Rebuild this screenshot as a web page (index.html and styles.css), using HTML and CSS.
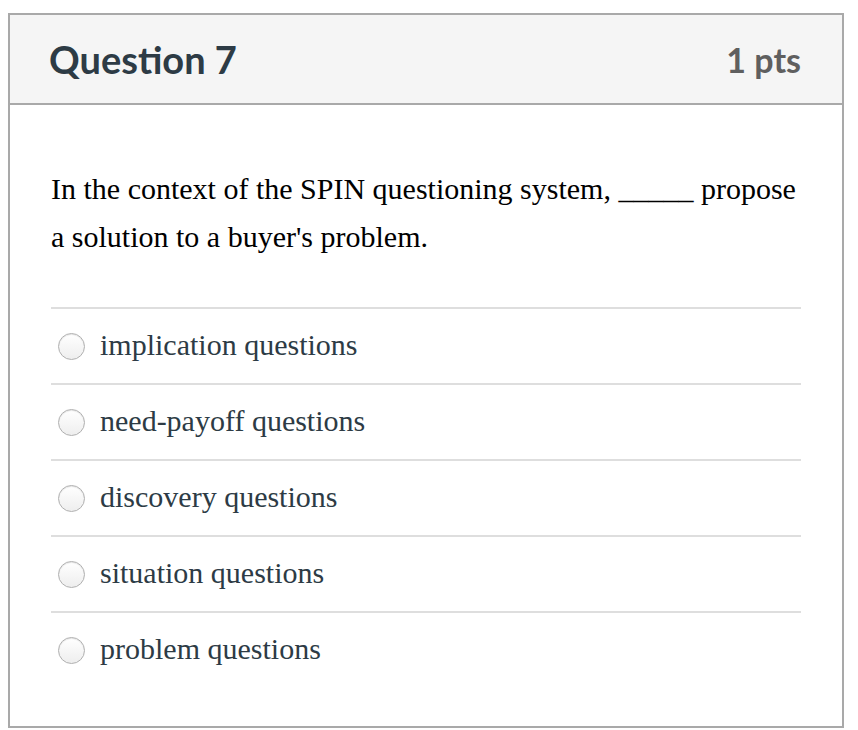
FILE: index.html
```html
<!DOCTYPE html>
<html>
<head>
<meta charset="utf-8">
<link rel="stylesheet" href="styles.css">
</head>
<body>
<div class="card">
  <div class="header">
    <h2 class="title">Question 7</h2>
    <span class="pts">1 pts</span>
  </div>
  <div class="content">
    <p class="question">In the context of the SPIN questioning system, _____ propose a solution to a buyer's problem.</p>
    <div class="answers">
      <label class="answer"><span class="radio"></span><span class="text">implication questions</span></label>
      <label class="answer"><span class="radio"></span><span class="text">need-payoff questions</span></label>
      <label class="answer"><span class="radio"></span><span class="text">discovery questions</span></label>
      <label class="answer"><span class="radio"></span><span class="text">situation questions</span></label>
      <label class="answer"><span class="radio"></span><span class="text">problem questions</span></label>
    </div>
  </div>
</div>
</body>
</html>
```

FILE: styles.css
```css
html, body {
  margin: 0;
  padding: 0;
  background: #ffffff;
}

.card {
  box-sizing: border-box;
  width: 836px;
  height: 715px;
  margin: 13px 0 0 8px;
  border: 2px solid #a9a9a9;
  background: #ffffff;
}

.header {
  box-sizing: border-box;
  height: 90px;
  background: #f5f5f5;
  border-bottom: 2px solid #a9a9a9;
  display: flex;
  align-items: center;
  justify-content: space-between;
  padding: 0 41px 0 39px;
  font-family: Lato, "Liberation Sans", sans-serif;
  font-weight: 700;
}

.title {
  margin: 0;
  font-size: 38px;
  font-weight: 700;
  color: #2d3b45;
}

.pts {
  font-size: 34px;
  color: #5f5f5f;
}

.content {
  padding: 60px 41px 0 41px;
  font-family: "Liberation Serif", "Times New Roman", serif;
}

.question {
  margin: 0 0 46px 0;
  font-size: 30px;
  line-height: 48px;
  color: #000000;
}

.answers {
  display: flex;
  flex-direction: column;
}

.answer {
  display: flex;
  align-items: center;
  height: 74px;
  border-top: 2px solid #dedede;
  padding-left: 7px;
  color: #2d3b45;
  font-size: 30px;
}

.radio {
  box-sizing: border-box;
  width: 27px;
  height: 27px;
  border-radius: 50%;
  border: 1px solid #b0b0b0;
  background: linear-gradient(#ffffff, #eeeeee);
  box-shadow: inset 0 1px 1px rgba(0, 0, 0, 0.1);
  margin-right: 15px;
  flex: none;
}

.text {
  line-height: 1;
  margin-top: -2px;
}
```
